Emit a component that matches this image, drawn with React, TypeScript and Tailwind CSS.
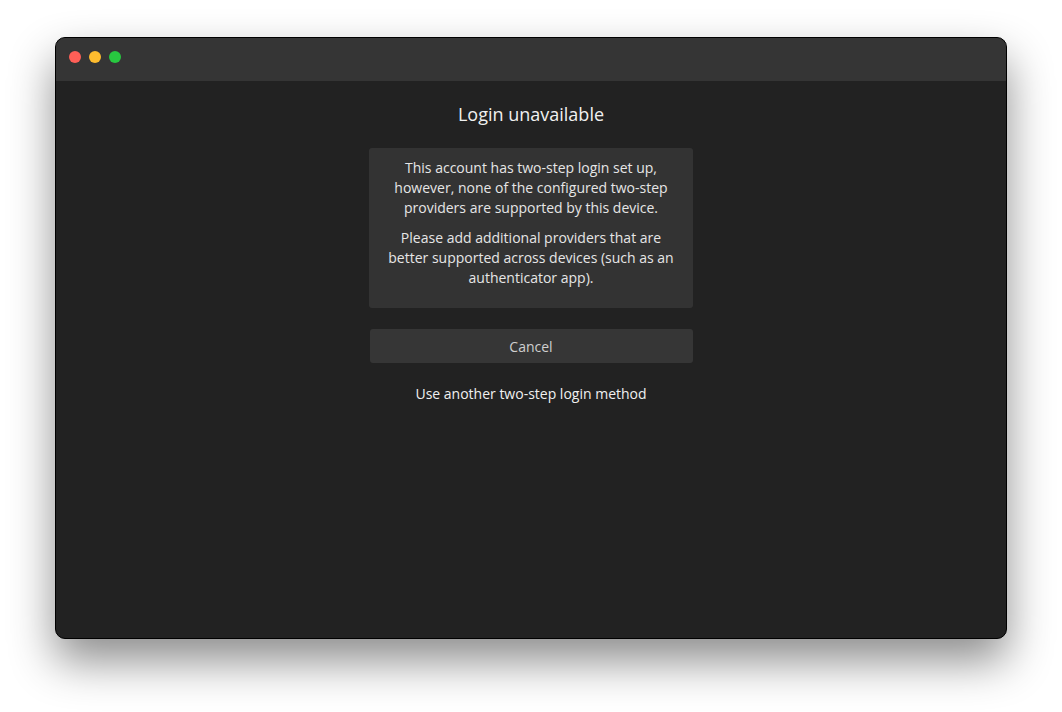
export default function App() {
  return (
    <div
      className="w-[1062px] h-[712px] bg-white pt-[37px] pl-[55px]"
      style={{ fontFamily: '"Open Sans", "Noto Sans", sans-serif' }}
    >
      <div className="w-[952px] h-[602px] rounded-[10px] border border-black bg-[#222222] overflow-hidden shadow-[0_22px_45px_rgba(0,0,0,0.45)] flex flex-col">
        {/* title bar */}
        <div className="h-[43px] bg-[#353535] flex items-start gap-[8px] pl-[13px] pt-[13px] shrink-0">
          <span className="w-[12px] h-[12px] rounded-full bg-[#ff5f57]" />
          <span className="w-[12px] h-[12px] rounded-full bg-[#febc2e]" />
          <span className="w-[12px] h-[12px] rounded-full bg-[#28c840]" />
        </div>

        <div className="flex flex-col items-center pt-[20px]">
          <h1 className="text-[18px] leading-[26px] text-[#f0f0f0]">Login unavailable</h1>

          <div className="mt-[21px] w-[324px] rounded-[3px] bg-[#333333] px-[16px] pt-[10px] pb-[10px] text-center text-[14px] leading-[20px] text-[#e6e6e6]">
            <p className="mb-[10px]">
              This account has two-step login set up, however, none of the configured two-step providers are supported by this device.
            </p>
            <p className="mb-[10px]">
              Please add additional providers that are better supported across devices (such as an authenticator app).
            </p>
          </div>

          <button className="mt-[21px] w-[323px] h-[34px] rounded-[3px] bg-[#363636] text-[14px] text-[#cfcfcf]">
            Cancel
          </button>

          <button className="mt-[21px] text-[14px] leading-[20px] text-[#f0f0f0]">
            Use another two-step login method
          </button>
        </div>
      </div>
    </div>
  );
}
